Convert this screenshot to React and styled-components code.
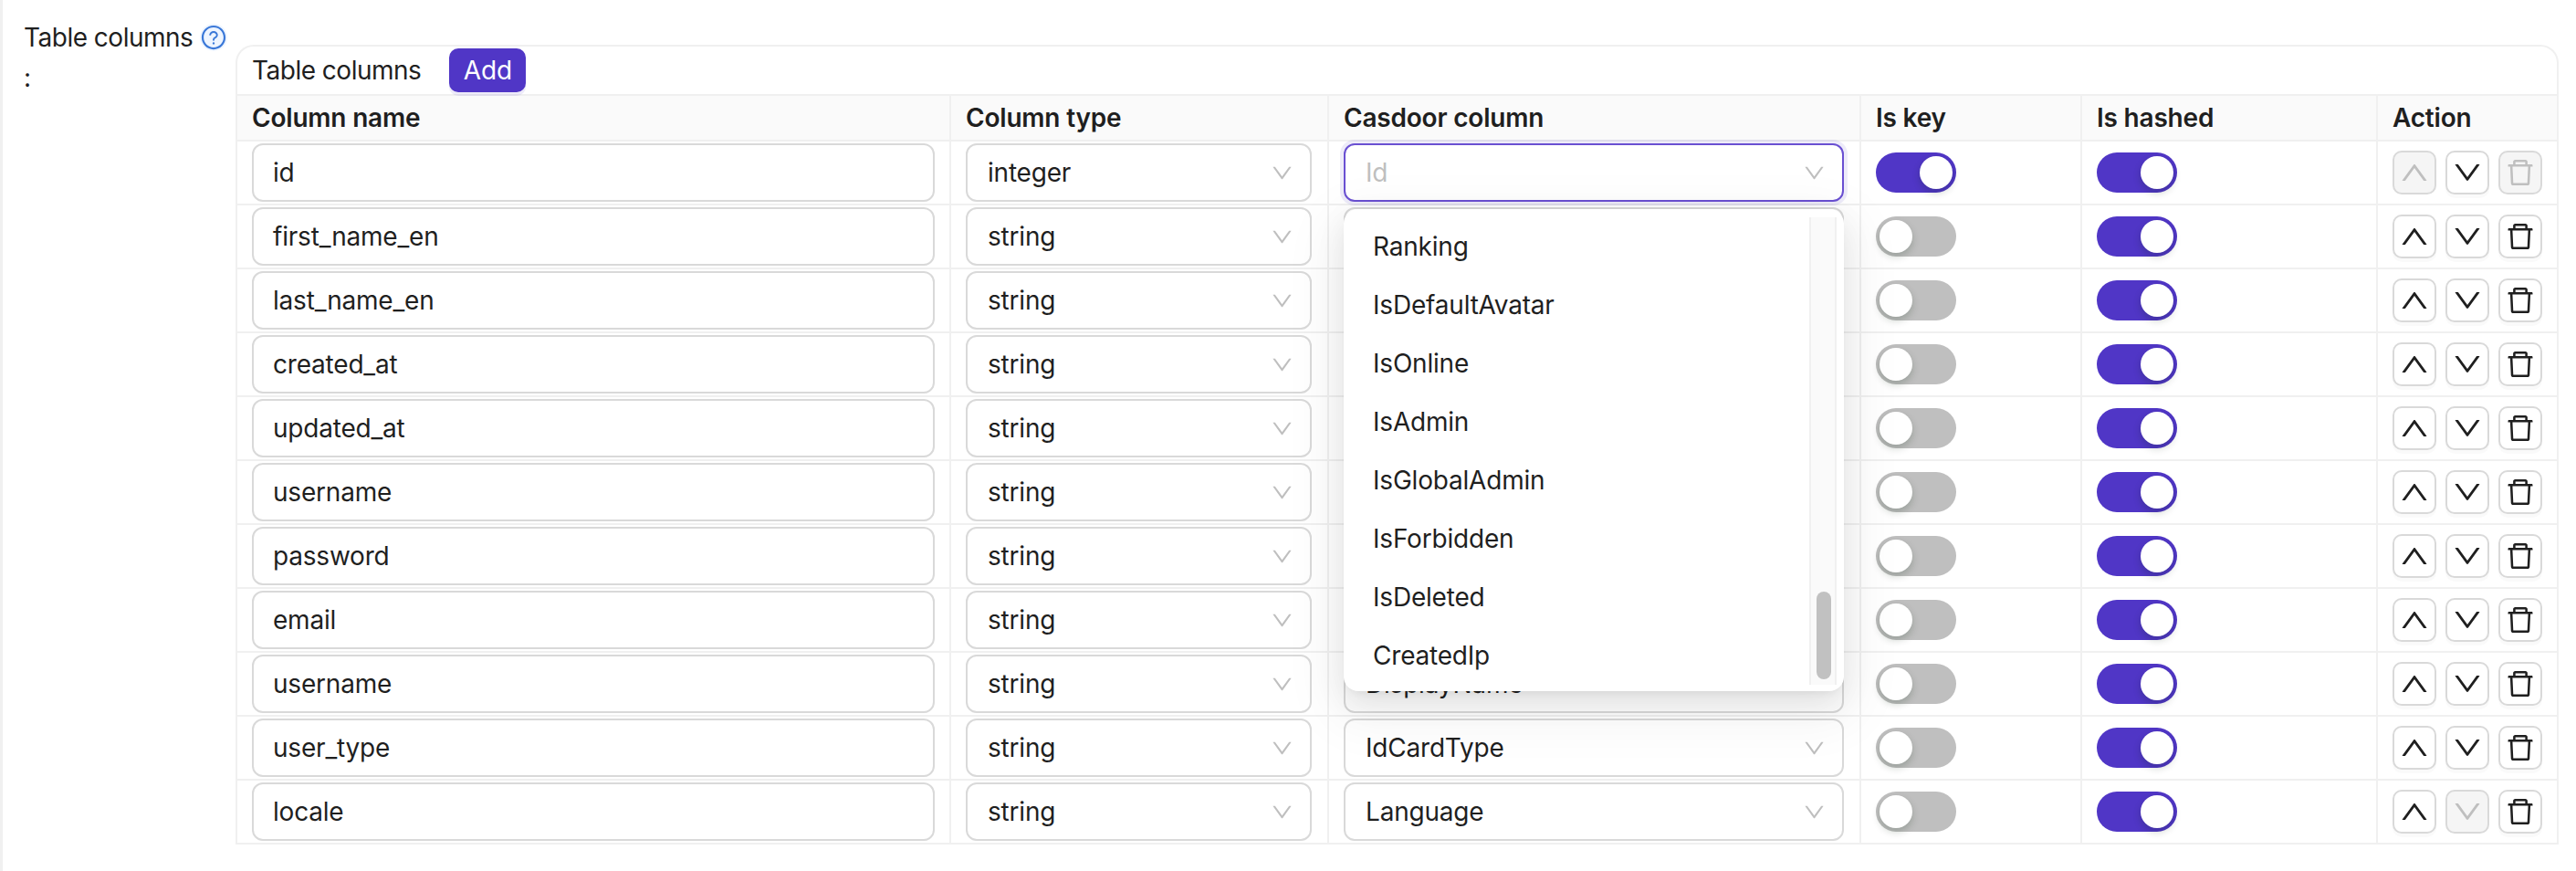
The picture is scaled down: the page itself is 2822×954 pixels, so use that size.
import React from "react";
import styled, { createGlobalStyle } from "styled-components";
import { AiOutlineUp, AiOutlineDown, AiOutlineDelete, AiOutlineQuestionCircle } from "react-icons/ai";

const Global = createGlobalStyle`
  html, body { margin: 0; padding: 0; background: #fff; }
  body { font-family: Inter, "Noto Sans", sans-serif; font-size: 28px; line-height: 44px; letter-spacing: -0.2px; color: #1f1f1f; }
  * { box-sizing: border-box; }
`;

const Page = styled.div`
  display: flex;
  align-items: flex-start;
  height: 954px;
  border-left: 3px solid #f0f0f0;
  padding-top: 49px;
`;

const Label = styled.div`
  width: 255px;
  flex: none;
  margin-top: -30px;
  padding-left: 23px;
  font-size: 28px;
  line-height: 44px;
  letter-spacing: -0.5px;
`;

const HelpIcon = styled.span`
  display: inline-flex;
  align-items: center;
  justify-content: center;
  width: 30px;
  height: 30px;
  margin-left: 8px;
  vertical-align: -6px;
  border-radius: 50%;
  background: #eef5ff;
  color: #3a78d8;
`;

const Card = styled.div`
  width: 2545px;
  flex: none;
  border: 2px solid #f0f0f0;
  border-bottom: none;
  border-radius: 20px 20px 0 0;
`;

const TitleBar = styled.div`
  display: flex;
  align-items: center;
  gap: 31px;
  height: 54px;
  padding-left: 16px;
  border-bottom: 2px solid #f0f0f0;
  letter-spacing: -0.5px;
`;

const AddButton = styled.button`
  width: 84px;
  height: 48px;
  padding: 0;
  border: none;
  border-radius: 10px;
  background: #5036c6;
  box-shadow: 0 4px 0 rgba(80, 54, 198, 0.1);
  color: #fff;
  font: inherit;
  line-height: 48px;
  letter-spacing: -0.2px;
`;

const Table = styled.table`
  width: 2541px;
  table-layout: fixed;
  border-collapse: separate;
  border-spacing: 0;
`;

const Col = styled.col`
  width: ${(p) => p.$w}px;
`;

const HeadCell = styled.th`
  height: 50px;
  padding: 0 16px;
  background: #fafafa;
  border-bottom: 2px solid #f0f0f0;
  border-right: ${(p) => (p.$last ? "none" : "2px solid #f0f0f0")};
  font-weight: 600;
  font-size: 28px;
  text-align: left;
  line-height: 44px;
`;

const Cell = styled.td`
  height: 70px;
  padding: 2px 16px;
  border-bottom: 2px solid #f0f0f0;
  border-right: ${(p) => (p.$last ? "none" : "2px solid #f0f0f0")};
  vertical-align: middle;
`;

const TextField = styled.div`
  height: 64px;
  padding: 0 21px;
  background: #fff;
  border: 2px solid #d9d9d9;
  border-radius: 12px;
  line-height: 60px;
  white-space: nowrap;
`;

const SelectBox = styled.div`
  position: relative;
  display: flex;
  align-items: center;
  justify-content: space-between;
  height: 64px;
  margin-right: 1px;
  padding: 0 17px 0 22px;
  background: #fff;
  border: 2px solid ${(p) => (p.$focused ? "#6a50d2" : "#d9d9d9")};
  border-radius: 12px;
  box-shadow: ${(p) => (p.$focused ? "0 0 0 4px rgba(80, 54, 198, 0.1)" : "none")};
  color: ${(p) => (p.$focused ? "#bfbfbf" : "inherit")};
  line-height: 60px;
  white-space: nowrap;
`;

const Caret = styled.span`
  display: inline-flex;
  color: rgba(0, 0, 0, 0.25);
`;

const Dropdown = styled.div`
  position: absolute;
  z-index: 10;
  top: 70px;
  left: -2px;
  right: -2px;
  display: flex;
  height: 528px;
  padding: 9px 8px 7px 8px;
  background: #fff;
  border-radius: 16px;
  box-shadow: 0 12px 32px 0 rgba(0, 0, 0, 0.08), 0 6px 12px -8px rgba(0, 0, 0, 0.12), 0 18px 56px 16px rgba(0, 0, 0, 0.05);
  color: #1f1f1f;
`;

const OptionList = styled.div`
  flex: 1;
`;

const Option = styled.div`
  height: 64px;
  padding-left: 24px;
  line-height: 64px;
`;

const ScrollTrack = styled.div`
  width: 30px;
  height: 512px;
  padding: 410px 4px 0 6px;
  background: #fafafa;
  border-left: 2px solid #f0f0f0;
  border-right: 2px solid #f0f0f0;
`;

const ScrollThumb = styled.div`
  height: 96px;
  border-radius: 8px;
  background: #c1c1c1;
`;

const Switch = styled.div`
  display: flex;
  justify-content: ${(p) => (p.$on ? "flex-end" : "flex-start")};
  width: 88px;
  height: 44px;
  padding: 4px;
  border-radius: 22px;
  background: ${(p) => (p.$on ? "#5036c6" : "#bfbfbf")};
`;

const Knob = styled.div`
  width: 36px;
  height: 36px;
  border-radius: 50%;
  background: #fff;
  box-shadow: 0 4px 8px 0 rgba(0, 35, 11, 0.2);
`;

const Actions = styled.div`
  display: flex;
  gap: 10px;
`;

const IconButton = styled.button`
  display: flex;
  align-items: center;
  justify-content: center;
  width: 48px;
  height: 48px;
  padding: 0;
  border: 2px solid #d9d9d9;
  border-radius: 10px;
  background: ${(p) => (p.disabled ? "#f5f5f5" : "#fff")};
  box-shadow: ${(p) => (p.disabled ? "none" : "0 4px 0 rgba(0, 0, 0, 0.02)")};
  color: ${(p) => (p.disabled ? "#bfbfbf" : "#1f1f1f")};
`;

const widths = [782, 414, 583, 242, 324, 196];
const heads = ["Column name", "Column type", "Casdoor column", "Is key", "Is hashed", "Action"];
const rows = [
  ["id", "integer", "Id"],
  ["first_name_en", "string", ""],
  ["last_name_en", "string", ""],
  ["created_at", "string", ""],
  ["updated_at", "string", ""],
  ["username", "string", ""],
  ["password", "string", ""],
  ["email", "string", ""],
  ["username", "string", "DisplayName"],
  ["user_type", "string", "IdCardType"],
  ["locale", "string", "Language"],
];
const options = ["Ranking", "IsDefaultAvatar", "IsOnline", "IsAdmin", "IsGlobalAdmin", "IsForbidden", "IsDeleted", "CreatedIp"];

const Select = ({ value, focused, children }) => (
  <SelectBox $focused={focused}>
    <span>{value}</span>
    <Caret><AiOutlineDown size={27} /></Caret>
    {children}
  </SelectBox>
);

const Toggle = ({ on }) => (
  <Switch $on={on}><Knob /></Switch>
);

export default function App() {
  return (
    <>
      <Global />
      <Page>
        <Label>
          Table columns
          <HelpIcon><AiOutlineQuestionCircle size={32} /></HelpIcon>
          <br />:
        </Label>
        <Card>
          <TitleBar>
            <span>Table columns</span>
            <AddButton>Add</AddButton>
          </TitleBar>
          <Table>
            <colgroup>
              {widths.map((w, i) => <Col key={i} $w={w} />)}
            </colgroup>
            <thead>
              <tr>
                {heads.map((h, i) => (
                  <HeadCell key={h} $last={i === 5}>{h}</HeadCell>
                ))}
              </tr>
            </thead>
            <tbody>
              {rows.map(([name, type, col], i) => (
                <tr key={i}>
                  <Cell><TextField>{name}</TextField></Cell>
                  <Cell><Select value={type} /></Cell>
                  <Cell>
                    <Select value={col} focused={i === 0}>
                      {i === 0 && (
                        <Dropdown>
                          <OptionList>
                            {options.map((o) => <Option key={o}>{o}</Option>)}
                          </OptionList>
                          <ScrollTrack><ScrollThumb /></ScrollTrack>
                        </Dropdown>
                      )}
                    </Select>
                  </Cell>
                  <Cell><Toggle on={i === 0} /></Cell>
                  <Cell><Toggle on /></Cell>
                  <Cell $last>
                    <Actions>
                      <IconButton disabled={i === 0}><AiOutlineUp size={36} /></IconButton>
                      <IconButton disabled={i === rows.length - 1}><AiOutlineDown size={36} /></IconButton>
                      <IconButton disabled={i === 0}><AiOutlineDelete size={36} /></IconButton>
                    </Actions>
                  </Cell>
                </tr>
              ))}
            </tbody>
          </Table>
        </Card>
      </Page>
    </>
  );
}
